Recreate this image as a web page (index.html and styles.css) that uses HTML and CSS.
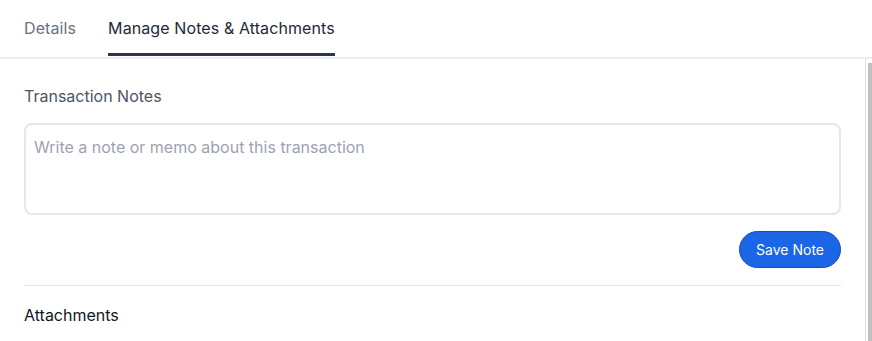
FILE: index.html
```html
<!DOCTYPE html>
<html lang="en">
<head>
    <meta charset="UTF-8">
    <meta name="viewport" content="width=device-width, initial-scale=1.0">
    <title>Transaction</title>
    <link rel="stylesheet" href="styles.css">
</head>
<body>
    <nav class="tabs">
        <div class="tab">Details</div>
        <div class="tab active">Manage Notes &amp; Attachments</div>
    </nav>
    <div class="body-wrap">
        <main class="panel">
            <h2 class="label">Transaction Notes</h2>
            <textarea class="note" placeholder="Write a note or memo about this transaction"></textarea>
            <div class="actions">
                <button class="save">Save Note</button>
            </div>
            <hr class="divider">
            <h2 class="section">Attachments</h2>
        </main>
        <div class="scroll-track"><div class="scroll-thumb"></div></div>
    </div>
</body>
</html>
```

FILE: styles.css
```css
* {
    box-sizing: border-box;
}

body {
    margin: 0;
    font-family: Inter, "Noto Sans", sans-serif;
    background: #fff;
    color: #1f2937;
    overflow: hidden;
}

.tabs {
    display: flex;
    gap: 32px;
    height: 59px;
    padding: 0 24px;
    border-bottom: 2px solid #ebecf0;
}

.tab {
    height: 56px;
    display: flex;
    align-items: center;
    padding-top: 2px;
    font-size: 16px;
    letter-spacing: 0.1px;
    color: #6b7280;
    border-bottom: 3px solid transparent;
}

.tab.active {
    color: #1f2937;
    border-bottom-color: #2d3748;
}

.body-wrap {
    display: flex;
    height: 282px;
}

.panel {
    flex: 1;
    padding: 25px 24px 0 24px;
}

.scroll-track {
    width: 7px;
    border-left: 1px solid #e3e3e3;
    padding: 4px 0 0 2px;
}

.scroll-thumb {
    height: 100%;
    background: #c1c1c1;
}

.label {
    margin: 0;
    font-size: 16px;
    font-weight: 400;
    color: #4a5568;
    line-height: 24px;
}

.note {
    display: block;
    width: 100%;
    height: 92px;
    margin-top: 15px;
    padding: 10px 8px;
    border: 2px solid #e6e7eb;
    border-radius: 8px;
    font-family: inherit;
    font-size: 16px;
    line-height: 24px;
    resize: none;
    outline: none;
}

.note::placeholder {
    color: #9ca3af;
}

.actions {
    display: flex;
    justify-content: flex-end;
    margin-top: 16px;
}

.save {
    height: 37px;
    padding: 0 16px;
    border: 1px solid #1b4fa6;
    border-radius: 999px;
    background: #1a66e6;
    color: #fff;
    font-family: inherit;
    font-size: 14px;
}

.divider {
    margin: 17px 0 0 0;
    border: none;
    border-top: 1px solid #e5e7eb;
}

.section {
    margin: 17px 0 0 0;
    font-size: 16px;
    font-weight: 400;
    line-height: 24px;
    color: #111827;
}
```
